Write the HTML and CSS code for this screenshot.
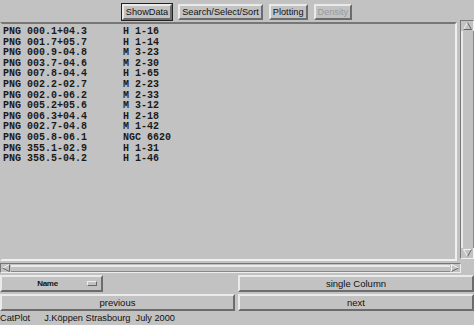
FILE: index.html
```html
<!DOCTYPE html>
<html>
<head>
<meta charset="utf-8">
<title>CatPlot</title>
<link rel="stylesheet" href="styles.css">
</head>
<body>
<div class="win">
	<div class="toolbar">
		<span class="btn def">ShowData</span>
		<span class="btn">Search/Select/Sort</span>
		<span class="btn">Plotting</span>
		<span class="btn off">Density</span>
	</div>
	<div class="mid">
		<div class="textbox">
<pre class="list">PNG 000.1+04.3      H 1-16
PNG 001.7+05.7      H 1-14
PNG 000.9-04.8      M 3-23
PNG 003.7-04.6      M 2-30
PNG 007.8-04.4      H 1-65
PNG 002.2-02.7      M 2-23
PNG 002.0-06.2      M 2-33
PNG 005.2+05.6      M 3-12
PNG 006.3+04.4      H 2-18
PNG 002.7-04.8      M 1-42
PNG 005.8-06.1      NGC 6620
PNG 355.1-02.9      H 1-31
PNG 358.5-04.2      H 1-46</pre>
		</div>
		<div class="vscroll">
			<svg class="arr" width="9" height="8" viewBox="0 0 9 8"><polygon points="4.5,0.5 8.5,7.5 0.5,7.5" fill="#c2c2c2"/><polyline points="0.5,7.5 4.5,0.5" stroke="#f4f4f4" fill="none"/><polyline points="4.5,0.5 8.5,7.5 0.5,7.5" stroke="#666" fill="none"/></svg>
			<span class="trough"></span>
			<svg class="arr" width="9" height="8" viewBox="0 0 9 8"><polygon points="0.5,0.5 8.5,0.5 4.5,7.5" fill="#c2c2c2"/><polyline points="4.5,7.5 0.5,0.5 8.5,0.5" stroke="#f4f4f4" fill="none"/><polyline points="8.5,0.5 4.5,7.5" stroke="#666" fill="none"/></svg>
		</div>
	</div>
	<div class="hscroll">
		<svg class="arr" width="8" height="8" viewBox="0 0 8 8"><polygon points="0.5,4 7.5,0.5 7.5,7.5" fill="#c2c2c2"/><polyline points="0.5,4 7.5,0.5" stroke="#f4f4f4" fill="none"/><polyline points="7.5,0.5 7.5,7.5 0.5,4" stroke="#666" fill="none"/></svg>
		<span class="htrough"></span>
		<svg class="arr" width="8" height="8" viewBox="0 0 8 8"><polygon points="0.5,0.5 7.5,4 0.5,7.5" fill="#c2c2c2"/><polyline points="0.5,7.5 0.5,0.5 7.5,4" stroke="#f4f4f4" fill="none"/><polyline points="7.5,4 0.5,7.5" stroke="#666" fill="none"/></svg>
	</div>
	<div class="rows">
		<div class="opt"><span class="optname">Name</span><span class="ind"></span></div>
		<span class="btn wide">single Column</span>
		<span class="btn wide">previous</span>
		<span class="btn wide">next</span>
	</div>
	<div class="status">CatPlot<span class="author">J.Köppen Strasbourg&nbsp; July 2000</span></div>
</div>
</body>
</html>
```
FILE: styles.css
```css
*{margin:0; padding:0;}
body{background:#c2c2c2; font-family:"Liberation Sans", Arial, sans-serif; font-size:9px; color:#111;}
.win{width:474px; height:325px; display:flex; flex-direction:column;}

.toolbar{height:21px; display:flex; justify-content:center; align-items:center; gap:6px; padding-top:1px;}
.btn{display:inline-block; height:12px; line-height:12px; padding:0 2px; border:2px solid; border-color:#eaeaea #6c6c6c #6c6c6c #eaeaea; background:#c2c2c2; font-size:9.2px; color:#111;}
.btn.def{outline:1px solid #222;}
.btn.off{color:#9a9a9a;}

.mid{height:239px; display:flex;}
.textbox{flex:1; border:2px solid; border-color:#777 #f0f0f0 #f0f0f0 #777; border-left-color:#c2c2c2; margin-right:3px; overflow:hidden;}
.list{font-family:"Liberation Mono", "Courier New", monospace; font-weight:bold; font-size:10px; line-height:10.6px; padding:3px 0 0 1px; color:#1a1a1a;}

.vscroll{width:12px; display:flex; flex-direction:column; align-items:center; border:1px solid; border-color:#777 #eee #eee #777; margin:-2px 0 2px;}
.trough{flex:1; width:10px; border-left:2px solid #eaeaea; border-right:1px solid #888;}
.arr{display:block; margin:1px 0;}

.hscroll{height:8px; display:flex; align-items:center; border:1px solid; border-color:#777 #eee #eee #777; margin:2px 13px 2px 0;}
.htrough{flex:1; height:4px; border-top:2px solid #eaeaea; border-bottom:1px solid #888;}
.hscroll .arr{margin:0 1px;}

.rows{display:grid; grid-template-columns:235px 236px; column-gap:3px; row-gap:2px;}
.btn.wide{text-align:center; height:13px; line-height:13px; padding:0; font-size:9.5px;}
.opt{width:99px; height:13px; border:2px solid; border-color:#eaeaea #6c6c6c #6c6c6c #eaeaea; display:flex; align-items:center;}
.optname{flex:1; text-align:center; font-size:8px; font-weight:bold; letter-spacing:-0.3px; padding-left:6px;}
.ind{width:8px; height:3px; border:1px solid; border-color:#eee #666 #666 #eee; margin-right:4px;}

.status{flex:1; display:flex; align-items:center; padding-bottom:1px; font-size:9.2px;}
.author{margin-left:14px;}
```
